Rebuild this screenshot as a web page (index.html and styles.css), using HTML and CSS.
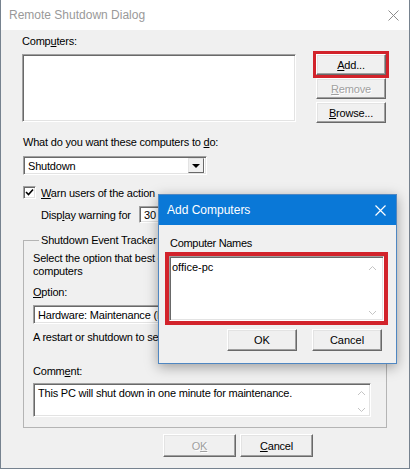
FILE: index.html
```html
<!DOCTYPE html>
<html lang="en">
<head>
    <meta charset="UTF-8">
    <title>Remote Shutdown Dialog</title>
    <link rel="stylesheet" href="styles.css">
</head>
<body>
    <div class="window">
        <div class="titlebar">
            <span class="title">Remote Shutdown Dialog</span>
            <svg class="close" width="11" height="11" viewBox="0 0 11 11">
                <path d="M0.5 0.5 L10.5 10.5 M10.5 0.5 L0.5 10.5" stroke="#8c8c8c" stroke-width="1" fill="none"/>
            </svg>
        </div>

        <div class="content">
            <div class="label">Comp<u>u</u>ters:</div>
            <div class="computers-row">
                <div class="listbox sunken"></div>
                <div class="side-buttons">
                    <button class="btn btn-marked"><u>A</u>dd...</button>
                    <button class="btn" disabled><u>R</u>emove</button>
                    <button class="btn"><u>B</u>rowse...</button>
                </div>
            </div>

            <div class="label action-label">What do you want these computers to <u>d</u>o:</div>
            <div class="combo sunken action-combo">
                <span class="combo-text">Shutdown</span>
                <span class="combo-arrow"></span>
            </div>

            <div class="check-row">
                <span class="checkbox sunken">
                    <svg width="9" height="9" viewBox="0 0 9 9">
                        <path d="M1 4 L3.5 6.5 L8 1.5" stroke="#000" stroke-width="1.6" fill="none"/>
                    </svg>
                </span>
                <span><u>W</u>arn users of the action</span>
            </div>

            <div class="warn-row">
                <span>Disp<u>l</u>ay warning for</span>
                <div class="field sunken">30</div>
            </div>

            <fieldset class="tracker">
                <legend>Shutdown Event Tracker</legend>
                <!-- the right half of these lines sits under the Add Computers dialog -->
                <div class="note">Select the option that best describes</div>
                <div class="note">computers</div>
                <div class="label option-label"><u>O</u>ption:</div>
                <div class="combo sunken option-combo">
                    <span class="combo-text">Hardware: Maintenance (Planned)</span>
                    <span class="combo-arrow"></span>
                </div>
                <div class="note restart-note">A restart or shutdown to service</div>
                <div class="label comment-label">Comm<u>e</u>nt:</div>
                <div class="textbox sunken comment-box">
                    <span>This PC will shut down in one minute for maintenance.</span>
                    <div class="scroll-arrows">
                        <svg width="9" height="6" viewBox="0 0 9 6"><path d="M1 5 L4.5 1.5 L8 5" stroke="#c4c4c4" fill="none"/></svg>
                        <svg width="9" height="6" viewBox="0 0 9 6"><path d="M1 1 L4.5 4.5 L8 1" stroke="#c4c4c4" fill="none"/></svg>
                    </div>
                </div>
            </fieldset>

            <div class="footer">
                <button class="btn btn-footer" disabled>O<u>K</u></button>
                <button class="btn btn-footer"><u>C</u>ancel</button>
            </div>
        </div>

        <div class="add-dialog">
            <div class="dialog-titlebar">
                <span class="dialog-title">Add Computers</span>
                <svg width="11" height="11" viewBox="0 0 11 11">
                    <path d="M0.5 0.5 L10.5 10.5 M10.5 0.5 L0.5 10.5" stroke="#fff" stroke-width="1.2" fill="none"/>
                </svg>
            </div>
            <div class="dialog-body">
                <div class="dialog-label">Computer Names</div>
                <div class="marked-frame">
                    <div class="textbox sunken names-box">
                        <span>office-pc</span>
                        <div class="scroll-arrows">
                            <svg width="9" height="6" viewBox="0 0 9 6"><path d="M1 5 L4.5 1.5 L8 5" stroke="#c4c4c4" fill="none"/></svg>
                            <svg width="9" height="6" viewBox="0 0 9 6"><path d="M1 1 L4.5 4.5 L8 1" stroke="#c4c4c4" fill="none"/></svg>
                        </div>
                    </div>
                </div>
                <div class="dialog-buttons">
                    <button class="btn btn-dialog">OK</button>
                    <button class="btn btn-dialog">Cancel</button>
                </div>
            </div>
        </div>
    </div>
</body>
</html>
```

FILE: styles.css
```css
:root {
    --face: #f0f0f0;
    --shadow: #a0a0a0;
    --dark-shadow: #696969;
    --light: #e3e3e3;
    --white: #FFFFFF;
    --accent: #0a78d7;
    --marker: #d2232b;
}

* {
    margin: 0;
    padding: 0;
    box-sizing: border-box;
}

body {
    width: 410px;
    height: 471px;
    overflow: hidden;
    font-family: 'Liberation Sans', Arial, sans-serif;
    font-size: 11px;
    letter-spacing: -0.2px;
    color: #000;
}

u {
    text-decoration-thickness: 1px;
    text-underline-offset: 1px;
}

.window {
    position: relative;
    height: 469px;
    background-color: var(--face);
    border: 1px solid #76828f;
    border-top: none;
}

.titlebar {
    height: 30px;
    background: var(--white);
    display: flex;
    justify-content: space-between;
    align-items: center;
    padding: 0 10px 0 8px;
}

.title {
    font-size: 12px;
    letter-spacing: 0;
    color: #999;
}

.content {
    padding: 5px 0 0 21px;
}

.label {
    line-height: 13px;
}

.sunken {
    background: var(--white);
    border: 1px solid;
    border-color: var(--shadow) var(--white) var(--white) var(--shadow);
    box-shadow: inset 1px 1px var(--dark-shadow), inset -1px -1px var(--light);
}

.btn {
    font: inherit;
    letter-spacing: inherit;
    color: #000;
    background: var(--face);
    border: 1px solid;
    border-color: var(--white) var(--dark-shadow) var(--dark-shadow) var(--white);
    box-shadow: inset -1px -1px var(--shadow), inset 1px 1px var(--light);
}

.btn:disabled {
    color: var(--shadow);
    text-shadow: 1px 1px var(--white);
}

.computers-row {
    display: flex;
    margin-top: 6px;
}

.listbox {
    width: 274px;
    height: 68px;
}

.side-buttons {
    display: flex;
    flex-direction: column;
    gap: 3px;
    margin-left: 20px;
}

.side-buttons .btn {
    width: 70px;
    height: 21px;
}

.btn-marked {
    outline: 3px solid var(--marker);
    outline-offset: 0;
}

.action-label {
    margin-top: 13px;
    margin-left: 1px;
}

.combo {
    display: flex;
    align-items: center;
    justify-content: space-between;
    height: 19px;
    padding: 0 2px 0 4px;
    overflow: hidden;
    white-space: nowrap;
}

.action-combo {
    width: 184px;
    margin-top: 7px;
    margin-left: 1px;
}

.combo-arrow {
    flex-shrink: 0;
    width: 16px;
    height: 15px;
    background: var(--face);
    border: 1px solid;
    border-color: var(--light) var(--dark-shadow) var(--dark-shadow) var(--light);
    display: flex;
    align-items: center;
    justify-content: center;
}

.combo-arrow::after {
    content: "";
    border-left: 4px solid transparent;
    border-right: 4px solid transparent;
    border-top: 4px solid #000;
    margin-top: 1px;
}

.check-row {
    display: flex;
    align-items: center;
    gap: 5px;
    margin-top: 11px;
    margin-left: 1px;
    height: 13px;
}

.checkbox {
    width: 13px;
    height: 13px;
    display: flex;
    align-items: center;
    justify-content: center;
}

.warn-row {
    display: flex;
    align-items: center;
    gap: 8px;
    margin-top: 7px;
    margin-left: 19px;
    height: 17px;
    white-space: nowrap;
}

.warn-row > span:first-child {
    width: 90px;
}

.field {
    width: 40px;
    height: 17px;
    padding: 2px 4px;
    line-height: 13px;
}

.tracker {
    width: 364px;
    margin: 11px 0 0 1px;
    padding: 5px 15px 10px 9px;
    border: 1px solid #b4b4b4;
}

.tracker legend {
    margin-left: 6px;
    padding: 0 2px;
    line-height: 13px;
}

.note {
    line-height: 13px;
    white-space: nowrap;
}

.option-label {
    margin-top: 8px;
}

.option-combo {
    width: 338px;
    margin-top: 6px;
}

.restart-note {
    margin-top: 7px;
}

.comment-label {
    margin-top: 21px;
}

.textbox {
    display: flex;
    justify-content: space-between;
    padding: 3px 4px 0 4px;
    line-height: 13px;
}

.comment-box {
    height: 34px;
    margin-top: 5px;
}

.scroll-arrows {
    display: flex;
    flex-direction: column;
    justify-content: space-between;
    padding: 3px 0 3px;
}

.footer {
    display: flex;
    gap: 4px;
    margin: 6px 0 0 141px;
}

.btn-footer {
    width: 73px;
    height: 23px;
}

/* Add Computers dialog, lying over the main window */
.add-dialog {
    position: absolute;
    left: 157px;
    top: 194px;
    width: 239px;
    height: 170px;
    background: var(--face);
    border: 1px solid #4f87c2;
    box-shadow: 0 3px 12px rgba(0, 0, 0, 0.35);
}

.dialog-titlebar {
    height: 30px;
    background: var(--accent);
    display: flex;
    justify-content: space-between;
    align-items: center;
    padding: 0 10px 0 8px;
}

.dialog-title {
    color: var(--white);
    font-size: 12px;
    letter-spacing: 0;
}

.dialog-body {
    padding: 12px 0 0 6px;
}

.dialog-label {
    line-height: 13px;
    margin-left: 5px;
    letter-spacing: -0.3px;
}

.marked-frame {
    width: 223px;
    height: 73px;
    margin-top: 2px;
    border: 4px solid var(--marker);
}

.names-box {
    height: 100%;
    letter-spacing: 0;
    padding: 4px 6px 0 2px;
}

.names-box .scroll-arrows {
    padding: 4px 0 4px;
}

.dialog-buttons {
    display: flex;
    justify-content: flex-end;
    gap: 15px;
    margin-top: 4px;
    padding-right: 14px;
}

.btn-dialog {
    width: 70px;
    height: 22px;
    letter-spacing: 0;
}
```
